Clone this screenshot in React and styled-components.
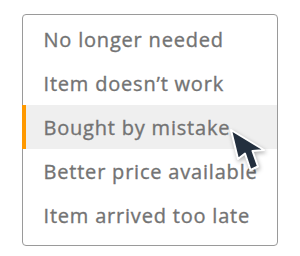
import React from "react";
import styled, { createGlobalStyle } from "styled-components";

const reasons = [
  "No longer needed",
  "Item doesn’t work",
  "Bought by mistake",
  "Better price available",
  "Item arrived too late",
];

const App = () => {
  return (
    <Page>
      <GlobalStyle />
      <Menu>
        {reasons.map((r, i) => (
          <Option key={r} active={i === 2}>
            {r}
          </Option>
        ))}
        <Cursor viewBox="0 0 44 50">
          <path
            d="M5 5 L12 34 L19 28.5 L24.5 45 L32 41.5 L26.5 26 L38 25 Z"
            fill="#232f3e"
            stroke="#ffffff"
            strokeWidth="2"
            strokeLinejoin="round"
          />
        </Cursor>
      </Menu>
    </Page>
  );
};

const GlobalStyle = createGlobalStyle`
  body {
    margin: 0;
    background: #ffffff;
  }
`;

const Page = styled.div`
  width: 300px;
  height: 256px;
  padding: 14px 22px 0;
  box-sizing: border-box;
  font-family: "Open Sans", sans-serif;
`;

const Menu = styled.div`
  position: relative;
  height: 232px;
  box-sizing: border-box;
  border: 1.5px solid #9a9a9a;
  border-radius: 4px;
  padding-top: 2px;
`;

const Option = styled.div`
  height: 44px;
  display: flex;
  align-items: center;
  padding-left: 18px;
  font-size: 20px;
  letter-spacing: 0.8px;
  color: #737373;
  -webkit-text-stroke: 0.35px #737373;
  white-space: nowrap;
  background: ${(p) => (p.active ? "#efefef" : "transparent")};
  border-left: 4px solid ${(p) => (p.active ? "#ff9900" : "transparent")};
  margin-left: -1.5px;
`;

const Cursor = styled.svg`
  position: absolute;
  left: 202.5px;
  top: 109.5px;
  width: 44px;
  height: 50px;
  filter: drop-shadow(1px 2px 2px rgba(0, 0, 0, 0.3));
`;

export default App;
